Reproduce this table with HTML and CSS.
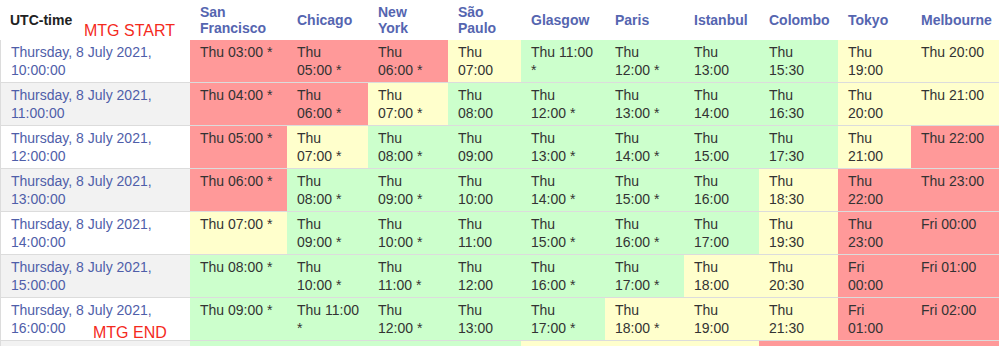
FILE: index.html
```html
<!DOCTYPE html>
<html lang="en">
<head>
<meta charset="utf-8">
<title>Meeting planner</title>
<link rel="stylesheet" href="styles.css">
</head>
<body>
<div class="planner">
  <table class="grid">
    <colgroup>
      <col class="c-utc"><col class="c-sf"><col class="c-chi"><col class="c-ny"><col class="c-sp"><col class="c-gla"><col class="c-par"><col class="c-ist"><col class="c-col"><col class="c-tok"><col class="c-mel">
    </colgroup>
    <thead>
      <tr>
        <th class="utc-head">UTC-time</th>
        <th>San Francisco</th>
        <th>Chicago</th>
        <th>New York</th>
        <th>São Paulo</th>
        <th>Glasgow</th>
        <th>Paris</th>
        <th>Istanbul</th>
        <th>Colombo</th>
        <th>Tokyo</th>
        <th>Melbourne</th>
      </tr>
    </thead>
    <tbody>
      <tr class="odd">
        <td class="utc">Thursday, 8 July 2021, 10:00:00</td>
        <td class="r">Thu 03:00 *</td><td class="r">Thu 05:00 *</td><td class="r">Thu 06:00 *</td><td class="y">Thu 07:00</td><td class="g">Thu&nbsp;11:00 *</td><td class="g">Thu 12:00 *</td><td class="g">Thu 13:00</td><td class="g">Thu 15:30</td><td class="y">Thu 19:00</td><td class="y">Thu 20:00</td>
      </tr>
      <tr class="even">
        <td class="utc">Thursday, 8 July 2021, 11:00:00</td>
        <td class="r">Thu 04:00 *</td><td class="r">Thu 06:00 *</td><td class="y">Thu 07:00 *</td><td class="g">Thu 08:00</td><td class="g">Thu 12:00 *</td><td class="g">Thu 13:00 *</td><td class="g">Thu 14:00</td><td class="g">Thu 16:30</td><td class="y">Thu 20:00</td><td class="y">Thu 21:00</td>
      </tr>
      <tr class="odd">
        <td class="utc">Thursday, 8 July 2021, 12:00:00</td>
        <td class="r">Thu 05:00 *</td><td class="y">Thu 07:00 *</td><td class="g">Thu 08:00 *</td><td class="g">Thu 09:00</td><td class="g">Thu 13:00 *</td><td class="g">Thu 14:00 *</td><td class="g">Thu 15:00</td><td class="g">Thu 17:30</td><td class="y">Thu 21:00</td><td class="r">Thu 22:00</td>
      </tr>
      <tr class="even">
        <td class="utc">Thursday, 8 July 2021, 13:00:00</td>
        <td class="r">Thu 06:00 *</td><td class="g">Thu 08:00 *</td><td class="g">Thu 09:00 *</td><td class="g">Thu 10:00</td><td class="g">Thu 14:00 *</td><td class="g">Thu 15:00 *</td><td class="g">Thu 16:00</td><td class="y">Thu 18:30</td><td class="r">Thu 22:00</td><td class="r">Thu 23:00</td>
      </tr>
      <tr class="odd">
        <td class="utc">Thursday, 8 July 2021, 14:00:00</td>
        <td class="y">Thu 07:00 *</td><td class="g">Thu 09:00 *</td><td class="g">Thu 10:00 *</td><td class="g">Thu 11:00</td><td class="g">Thu 15:00 *</td><td class="g">Thu 16:00 *</td><td class="g">Thu 17:00</td><td class="y">Thu 19:30</td><td class="r">Thu 23:00</td><td class="r">Fri 00:00</td>
      </tr>
      <tr class="even">
        <td class="utc">Thursday, 8 July 2021, 15:00:00</td>
        <td class="g">Thu 08:00 *</td><td class="g">Thu 10:00 *</td><td class="g">Thu 11:00 *</td><td class="g">Thu 12:00</td><td class="g">Thu 16:00 *</td><td class="g">Thu 17:00 *</td><td class="y">Thu 18:00</td><td class="y">Thu 20:30</td><td class="r">Fri 00:00</td><td class="r">Fri 01:00</td>
      </tr>
      <tr class="odd">
        <td class="utc">Thursday, 8 July 2021, 16:00:00</td>
        <td class="g">Thu 09:00 *</td><td class="g">Thu&nbsp;11:00 *</td><td class="g">Thu 12:00 *</td><td class="g">Thu 13:00</td><td class="g">Thu 17:00 *</td><td class="y">Thu 18:00 *</td><td class="y">Thu 19:00</td><td class="y">Thu 21:30</td><td class="r">Fri 01:00</td><td class="r">Fri 02:00</td>
      </tr>
      <tr class="even">
        <td class="utc">Thursday, 8 July 2021, 17:00:00</td>
        <td class="g">Thu 10:00 *</td><td class="g">Thu 12:00 *</td><td class="g">Thu 13:00 *</td><td class="g">Thu 14:00</td><td class="y">Thu 18:00 *</td><td class="y">Thu 19:00 *</td><td class="y">Thu 20:00</td><td class="r">Thu 22:30</td><td class="r">Fri 02:00</td><td class="r">Fri 03:00</td>
      </tr>
    </tbody>
  </table>
  <span class="mark mark-start">MTG START</span>
  <span class="mark mark-end">MTG END</span>
</div>
</body>
</html>
```

FILE: styles.css
```css
html, body {
  margin: 0;
  padding: 0;
  background: #ffffff;
}

body {
  font-family: "Liberation Sans", Arial, Helvetica, sans-serif;
  font-size: 14px;
  color: #333333;
}

.planner {
  position: relative;
  width: 999px;
}

.grid {
  width: 999px;
  table-layout: fixed;
  border-collapse: separate;
  border-spacing: 0;
}

.c-utc { width: 190px; }
.c-sf  { width: 97px; }
.c-chi { width: 81px; }
.c-ny  { width: 80px; }
.c-sp  { width: 73px; }
.c-gla { width: 84px; }
.c-par { width: 79px; }
.c-ist { width: 75px; }
.c-col { width: 79px; }
.c-tok { width: 73px; }
.c-mel { width: 88px; }

.grid th {
  height: 32px;
  padding: 4px 12px 4px 10px;
  line-height: 16px;
  font-weight: bold;
  text-align: left;
  vertical-align: middle;
  color: #5565b0;
  background: #ffffff;
}

.grid th.utc-head {
  color: #222222;
}

.grid td {
  padding: 3px 12px 3px 10px;
  line-height: 18px;
  height: 36px;
  vertical-align: top;
  border-bottom: 1px solid #dcdcdc;
}

.grid td.utc {
  color: #4f5ea9;
  border-left: 1px solid #dcdcdc;
  padding-left: 10px;
}

.grid tr.odd td.utc { background: #ffffff; }
.grid tr.even td.utc { background: #f2f2f2; }

.grid td.r { background: #ff9999; }
.grid td.y { background: #ffffcc; }
.grid td.g { background: #ccffcc; }

.mark {
  position: absolute;
  font-size: 16px;
  line-height: 16px;
  color: #f42a1d;
  white-space: nowrap;
}

.mark-start {
  left: 84px;
  top: 23px;
}

.mark-end {
  left: 93px;
  top: 325px;
}
```
